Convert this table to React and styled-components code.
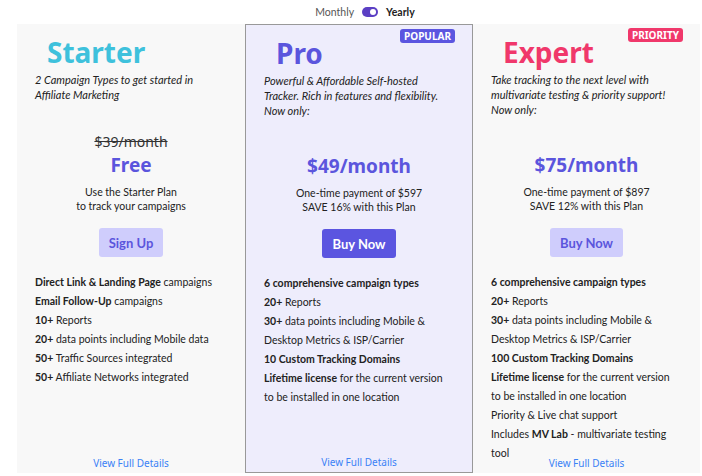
import React, { useState } from 'react';
import styled, { createGlobalStyle } from 'styled-components';

const Global = createGlobalStyle`
  html, body { margin: 0; padding: 0; background: #fff; }
  body { font-family: Lato, 'Liberation Sans', sans-serif; color: #222; }
`;

const HEAD = "'Noto Sans', 'Liberation Sans', sans-serif";

const Page = styled.div`width: 702px; height: 476px; overflow: hidden;`;

const ToggleRow = styled.div`
  height: 24px; display: flex; align-items: center; justify-content: center;
  gap: 8px; font-size: 10.5px; color: #444; padding-left: 28px;
`;
const ToggleLabel = styled.span`
  font-weight: ${p => (p.$active ? 700 : 400)};
  color: ${p => (p.$active ? '#222' : '#555')};
`;
const Switch = styled.button`
  width: 16px; height: 10px; border-radius: 5px; border: none; padding: 0;
  background: #5b3fc4; position: relative; cursor: pointer;
  &::after {
    content: ''; position: absolute; top: 2px; width: 6px; height: 6px;
    border-radius: 50%; background: #fff;
    left: ${p => (p.$on ? '8px' : '2px')};
  }
`;

const Grid = styled.div`
  display: grid; grid-template-columns: 228px 228px 227px;
  margin-left: 17px; height: 449px;
`;

const Card = styled.div`
  position: relative; display: flex; flex-direction: column;
  padding: 11px 18px 0;
  background: ${p => (p.$featured ? '#eeedfc' : '#f8f8f8')};
  border: ${p => (p.$featured ? '1px solid #999' : 'none')};
  box-sizing: border-box; overflow: hidden;
`;

const Badge = styled.span`
  position: absolute; top: 4px; right: 17px; font-family: ${HEAD};
  background: ${p => p.$color}; color: #fff; font-size: 10px; font-weight: 700;
  padding: 0 4px; line-height: 14px; border-radius: 3px;
`;

const Title = styled.h2`
  margin: 0 0 0 12px; font-family: ${HEAD}; font-size: 28px; line-height: 34px;
  font-weight: 700; color: ${p => p.$color};
`;

const Desc = styled.p`
  margin: 3px 0 0; font-size: 11px; line-height: 15px; font-style: italic;
  height: 45px; color: #222;
`;

const PriceArea = styled.div`
  height: 60px; display: flex; flex-direction: column; justify-content: flex-end;
  align-items: center; font-family: ${HEAD};
`;
const OldPrice = styled.div`
  font-size: 14px; line-height: 22px; text-decoration: line-through; color: #333;
`;
const Price = styled.div`
  font-size: 19px; line-height: 24px; font-weight: 700; color: #5b55dd;
`;
const Sub = styled.div`
  margin-top: 8px; text-align: center; font-size: 10.5px; line-height: 14px; color: #222;
`;

const Btn = styled.button`
  align-self: center; margin-top: 15px; height: 29px; padding: 0 10px;
  border: none; border-radius: 3px; font-family: inherit; font-size: 13px;
  font-weight: 700; cursor: pointer;
  background: ${p => (p.$primary ? '#5b55e0' : '#cfcdfc')};
  color: ${p => (p.$primary ? '#fff' : '#5b55dd')};
`;

const Features = styled.ul`
  list-style: none; margin: 16px 0 0; padding: 0 6px 0 0;
  font-size: 10.5px; line-height: 19px; color: #222;
  b { font-weight: 700; }
`;

const Details = styled.a`
  position: absolute; left: 0; right: 0; bottom: 3px; font-family: ${HEAD};
  text-align: center; font-size: 10px; line-height: 14px; color: #3b82f6;
  text-decoration: none;
`;

const plans = [
  {
    name: 'Starter', color: '#3ec1dc',
    desc: '2 Campaign Types to get started in Affiliate Marketing',
    old: '$39/month', price: 'Free',
    sub: ['Use the Starter Plan', 'to track your campaigns'],
    btn: 'Sign Up',
    features: [
      [<b>Direct Link &amp; Landing Page</b>, ' campaigns'],
      [<b>Email Follow-Up</b>, ' campaigns'],
      [<b>10+</b>, ' Reports'],
      [<b>20+</b>, ' data points including Mobile data'],
      [<b>50+</b>, ' Traffic Sources integrated'],
      [<b>50+</b>, ' Affiliate Networks integrated'],
    ],
  },
  {
    name: 'Pro', color: '#5b55dd', featured: true,
    badge: 'POPULAR', badgeColor: '#5b55e0',
    desc: 'Powerful & Affordable Self-hosted Tracker. Rich in features and flexibility. Now only:',
    price: '$49/month',
    sub: ['One-time payment of $597', 'SAVE 16% with this Plan'],
    btn: 'Buy Now', primary: true,
    features: [
      [<b>6 comprehensive campaign types</b>],
      [<b>20+</b>, ' Reports'],
      [<b>30+</b>, ' data points including Mobile & Desktop Metrics & ISP/Carrier'],
      [<b>10 Custom Tracking Domains</b>],
      [<b>Lifetime license</b>, ' for the current version to be installed in one location'],
    ],
  },
  {
    name: 'Expert', color: '#f0386b',
    badge: 'PRIORITY', badgeColor: '#f0386b',
    desc: 'Take tracking to the next level with multivariate testing & priority support! Now only:',
    price: '$75/month',
    sub: ['One-time payment of $897', 'SAVE 12% with this Plan'],
    btn: 'Buy Now',
    features: [
      [<b>6 comprehensive campaign types</b>],
      [<b>20+</b>, ' Reports'],
      [<b>30+</b>, ' data points including Mobile & Desktop Metrics & ISP/Carrier'],
      [<b>100 Custom Tracking Domains</b>],
      [<b>Lifetime license</b>, ' for the current version to be installed in one location'],
      ['Priority & Live chat support'],
      ['Includes ', <b>MV Lab</b>, ' - multivariate testing tool'],
    ],
  },
];

export default function App() {
  const [yearly, setYearly] = useState(true);
  return (
    <Page>
      <Global />
      <ToggleRow>
        <ToggleLabel $active={!yearly}>Monthly</ToggleLabel>
        <Switch $on={yearly} onClick={() => setYearly(!yearly)} />
        <ToggleLabel $active={yearly}>Yearly</ToggleLabel>
      </ToggleRow>
      <Grid>
        {plans.map(p => (
          <Card key={p.name} $featured={p.featured}>
            {p.badge && <Badge $color={p.badgeColor}>{p.badge}</Badge>}
            <Title $color={p.color}>{p.name}</Title>
            <Desc>{p.desc}</Desc>
            <PriceArea>
              {p.old && <OldPrice>{p.old}</OldPrice>}
              <Price>{p.price}</Price>
            </PriceArea>
            <Sub>{p.sub[0]}<br />{p.sub[1]}</Sub>
            <Btn $primary={p.primary}>{p.btn}</Btn>
            <Features>
              {p.features.map((f, i) => <li key={i}>{f.map((x, j) => <React.Fragment key={j}>{x}</React.Fragment>)}</li>)}
            </Features>
            <Details href="#">View Full Details</Details>
          </Card>
        ))}
      </Grid>
    </Page>
  );
}
